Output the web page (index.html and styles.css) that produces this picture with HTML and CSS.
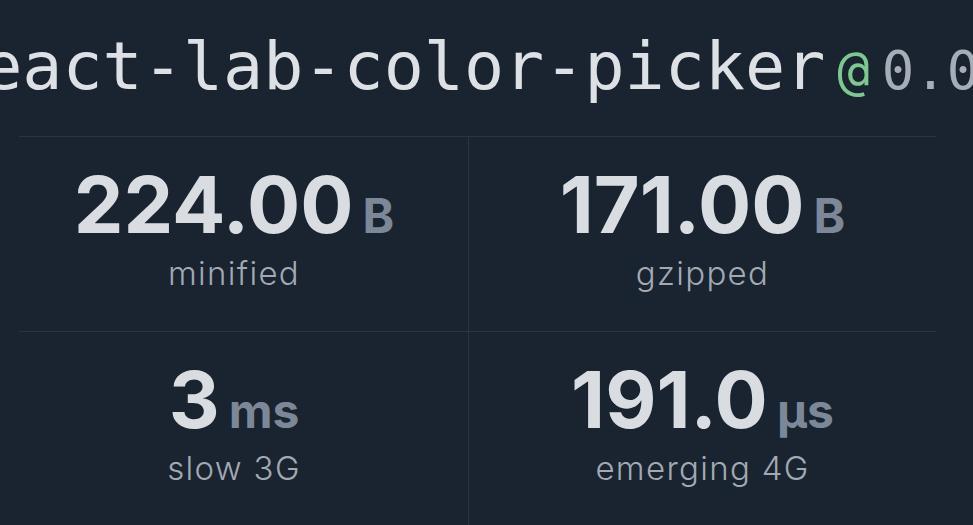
FILE: index.html
```html
<!DOCTYPE html>
<html lang="en">
<head>
<meta charset="utf-8">
<title>react-lab-color-picker@0.0 - bundle size</title>
<link rel="stylesheet" href="styles.css">
</head>
<body>
<main class="page">
  <header class="header">
    <h1 class="title"><span class="name">react-lab-color-picker</span><span class="at">@</span><span class="version">0.0.1</span></h1>
  </header>
  <section class="stats">
    <div class="row">
      <div class="stat stat-left">
        <div class="value"><span class="num">224.00</span><span class="unit">B</span></div>
        <div class="label">minified</div>
      </div>
      <div class="stat stat-right">
        <div class="value"><span class="num">171.00</span><span class="unit">B</span></div>
        <div class="label">gzipped</div>
      </div>
    </div>
    <div class="row">
      <div class="stat stat-left">
        <div class="value"><span class="num">3</span><span class="unit">ms</span></div>
        <div class="label">slow 3G</div>
      </div>
      <div class="stat stat-right">
        <div class="value"><span class="num">191.0</span><span class="unit">µs</span></div>
        <div class="label">emerging 4G</div>
      </div>
    </div>
  </section>
</main>
</body>
</html>
```
FILE: styles.css
```css
html, body {
  margin: 0;
  padding: 0;
  background: #1a2330;
  overflow: hidden;
}

.page {
  width: 973px;
  height: 525px;
  overflow: hidden;
}

.header {
  box-sizing: border-box;
  height: 136px;
  padding-top: 33px;
}

.title {
  margin: 0 0 0 -58px;
  white-space: nowrap;
  font-weight: 400;
  font-family: "DejaVu Sans Mono", "Liberation Mono", monospace;
  line-height: 66px;
}

.name {
  font-size: 66.7px;
  color: #dde0e4;
}

.at {
  font-size: 54px;
  line-height: 1;
  color: #7cc88e;
  margin: 0 12px 0 12px;
}

.version {
  font-size: 54px;
  line-height: 1;
  color: #a6adb6;
}

.stats {
  font-family: Inter, "Noto Sans", sans-serif;
}

.row {
  display: flex;
  box-sizing: border-box;
  width: 917px;
  height: 195px;
  margin-left: 19px;
  border-top: 1px solid #2a3441;
}

.stat {
  box-sizing: border-box;
  display: flex;
  flex-direction: column;
  align-items: center;
  padding-top: 28px;
}

.stat-left {
  width: 450px;
  padding-right: 19px;
  border-right: 1px solid #2a3441;
}

.stat-right {
  width: 467px;
}

.value {
  display: flex;
  align-items: baseline;
  white-space: nowrap;
  height: 79px;
}

.num {
  font-size: 79px;
  line-height: 79px;
  font-weight: 700;
  color: #d9dce0;
}

.unit {
  font-size: 48px;
  line-height: 1;
  font-weight: 700;
  color: #7c8898;
  margin-left: 9px;
}

.label {
  margin-top: 13px;
  font-size: 33px;
  line-height: 33px;
  font-weight: 300;
  color: #a1a9b3;
  letter-spacing: 1.3px;
  white-space: nowrap;
}
```
